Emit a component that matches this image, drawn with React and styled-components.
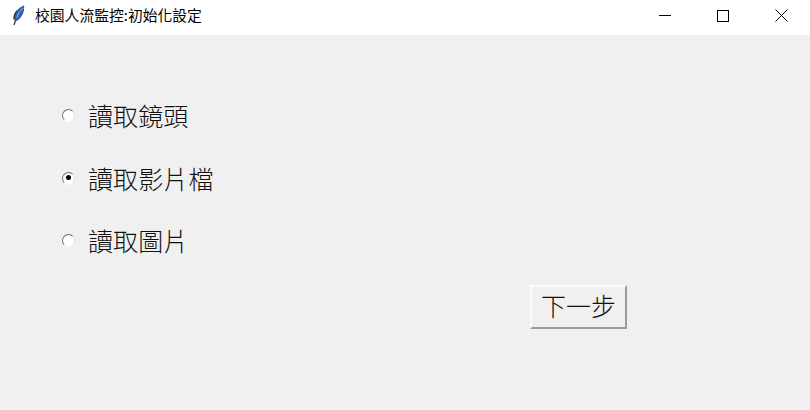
import styled, { createGlobalStyle } from "styled-components";

const GlobalStyle = createGlobalStyle`
  html, body {
    margin: 0;
    padding: 0;
    background: #f0f0f0;
  }
`;

const Window = styled.div`
  width: 810px;
  height: 410px;
  display: flex;
  flex-direction: column;
  overflow: hidden;
  background: #f0f0f0;
  font-family: "Noto Sans CJK TC", "Liberation Sans", sans-serif;
  color: #111;
`;

const TitleBar = styled.div`
  height: 35px;
  flex: none;
  display: flex;
  align-items: center;
  background: #fff;
  padding-left: 12px;
`;

const Title = styled.div`
  margin-left: 10px;
  font-size: 14.8px;
  line-height: 20px;
  margin-top: -6px;
  color: #000;
`;

const Controls = styled.div`
  margin-left: auto;
  display: flex;
  height: 100%;
`;

const ControlButton = styled.div`
  width: 58px;
  display: flex;
  align-items: center;
  justify-content: center;
  padding-bottom: 4px;
  box-sizing: border-box;
`;

const Content = styled.div`
  flex: 1;
  display: flex;
  flex-direction: column;
  padding: 63px 183px 0 62px;
`;

const RadioList = styled.div`
  display: flex;
  flex-direction: column;
  gap: 26px;
`;

const RadioRow = styled.label`
  display: flex;
  align-items: center;
  height: 36.5px;
`;

const RadioCircle = styled.span`
  position: relative;
  width: 13px;
  height: 13px;
  flex: none;
  box-sizing: border-box;
  border-radius: 50%;
  background: #fff;
  border: 1.5px solid;
  border-color: #6e6e6e #e4e4e4 #fafafa #6e6e6e;
  margin-top: -1px;

  &::after {
    content: "";
    display: ${(p) => (p.$checked ? "block" : "none")};
    position: absolute;
    left: 2.5px;
    top: 2.5px;
    width: 5px;
    height: 5px;
    border-radius: 50%;
    background: #000;
  }
`;

const RadioText = styled.span`
  margin-left: 13px;
  font-size: 25px;
  letter-spacing: 0.1px;
  line-height: 36px;
  font-weight: 300;
  margin-top: -2px;
`;

const Footer = styled.div`
  display: flex;
  justify-content: flex-end;
  margin-top: 25px;
`;

const NextButton = styled.button`
  width: 97px;
  height: 44px;
  padding: 0 0 3px;
  box-sizing: border-box;
  background: #f0f0f0;
  border: 2px solid;
  border-color: #fbfbfb #9a9a9a #9a9a9a #fbfbfb;
  font-family: inherit;
  font-size: 25px;
  font-weight: 300;
  line-height: 36px;
  color: #111;
`;

const Feather = () => (
  <svg width="13" height="20" viewBox="0 0 13 20" style={{ marginTop: -5 }}>
    <path d="M2 20 L4 14" stroke="#333" strokeWidth="1.3" fill="none" />
    <path d="M2 14.5 C1.5 9 6 2.5 12 0.5 C13 6 10 12.5 5 16 Z" fill="#2f5fa8" />
    <path d="M5 12.5 C6 8.5 8 6 11 3" stroke="#9cc0ea" strokeWidth="1" fill="none" />
    <path d="M2 14.5 C1.5 11 3 8 5 5.5" stroke="#1c2a44" strokeWidth="1.2" fill="none" />
  </svg>
);

const options = [
  { label: "讀取鏡頭", checked: false },
  { label: "讀取影片檔", checked: true },
  { label: "讀取圖片", checked: false },
];

const App = () => {
  return (
    <>
      <GlobalStyle />
      <Window>
        <TitleBar>
          <Feather />
          <Title>校園人流監控:初始化設定</Title>
          <Controls>
            <ControlButton>
              <svg width="12" height="12" viewBox="0 0 12 12">
                <path d="M0 5.5 H12" stroke="#000" fill="none" />
              </svg>
            </ControlButton>
            <ControlButton>
              <svg width="12" height="12" viewBox="0 0 12 12">
                <rect x="0.5" y="0.5" width="11" height="11" stroke="#000" fill="none" />
              </svg>
            </ControlButton>
            <ControlButton>
              <svg width="13" height="13" viewBox="0 0 13 13">
                <path d="M0.5 0.5 L12.5 12.5 M12.5 0.5 L0.5 12.5" stroke="#000" fill="none" />
              </svg>
            </ControlButton>
          </Controls>
        </TitleBar>
        <Content>
          <RadioList>
            {options.map((o) => (
              <RadioRow key={o.label}>
                <RadioCircle $checked={o.checked} />
                <RadioText>{o.label}</RadioText>
              </RadioRow>
            ))}
          </RadioList>
          <Footer>
            <NextButton>下一步</NextButton>
          </Footer>
        </Content>
      </Window>
    </>
  );
};

export default App;
